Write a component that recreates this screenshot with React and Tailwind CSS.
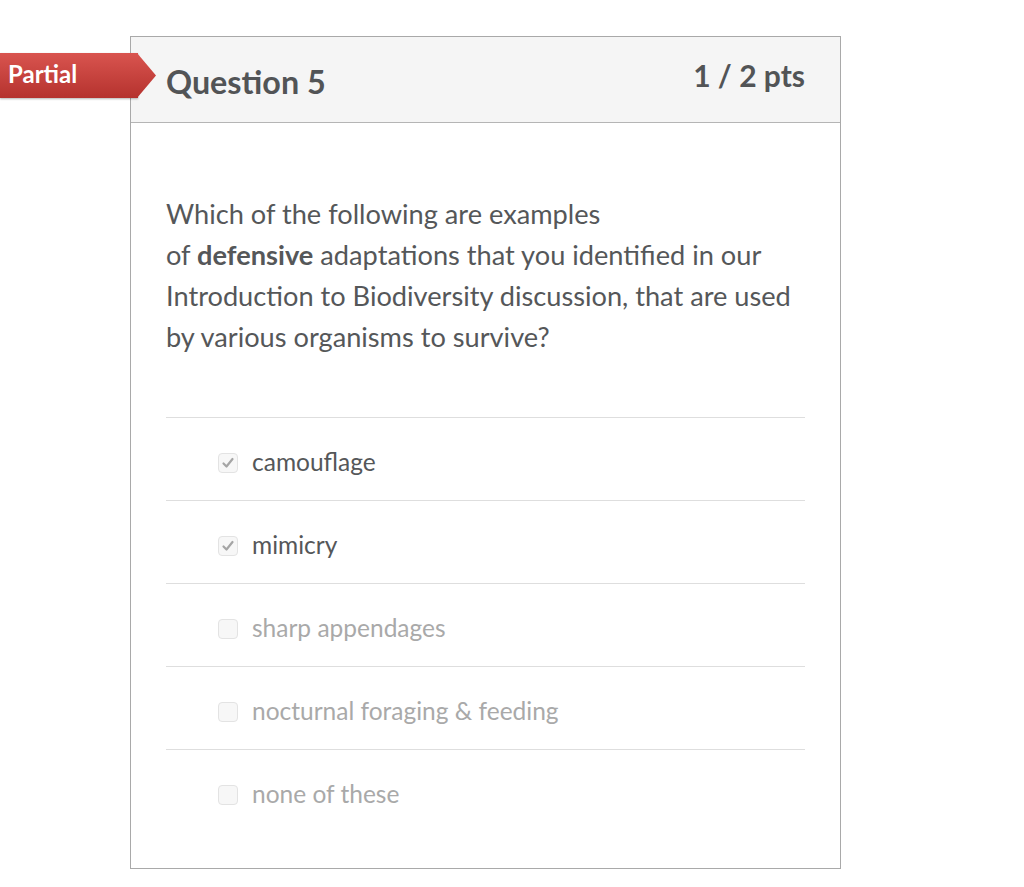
import React from "react";

const answers = [
  { text: "camouflage", checked: true },
  { text: "mimicry", checked: true },
  { text: "sharp appendages", checked: false },
  { text: "nocturnal foraging & feeding", checked: false },
  { text: "none of these", checked: false },
];

function Box({ checked }) {
  return (
    <span className="flex h-[20px] w-[20px] shrink-0 items-center justify-center rounded-[4px] border border-[#e3e3e3] bg-[#f7f7f7]">
      {checked && (
        <svg width="14" height="14" viewBox="0 0 14 14" fill="none">
          <path d="M2.5 7.5 L5.5 10.5 L11.5 3" stroke="#a5a5a5" strokeWidth="2.2" strokeLinecap="round" strokeLinejoin="round" />
        </svg>
      )}
    </span>
  );
}

export default function App() {
  return (
    <div className="relative h-[887px] w-[1024px] bg-white font-['Lato',sans-serif] text-[#555759]">
      {/* partial tag */}
      <div className="absolute left-0 top-[53px] z-10 flex h-[45px] items-center">
        <div className="flex h-full w-[138px] items-center bg-gradient-to-b from-[#d9544f] to-[#b5322e] pb-[3px] pl-[8px] text-[24px] font-bold text-white shadow-[0_1px_2px_rgba(0,0,0,0.3)]">
          Partial
        </div>
        <svg width="20" height="45" viewBox="0 0 20 45" className="-ml-px">
          <defs>
            <linearGradient id="tg" x1="0" y1="0" x2="0" y2="1">
              <stop offset="0" stopColor="#d9544f" />
              <stop offset="1" stopColor="#b5322e" />
            </linearGradient>
          </defs>
          <path d="M0 0 L19 22.5 L0 45 Z" fill="url(#tg)" />
        </svg>
      </div>

      <div className="pt-[36px] pl-[130px]">
        <div className="w-[711px] h-[833px] border border-[#a9a9a9] bg-white">
          <div className="flex h-[86px] items-start justify-between border-b border-[#b5b5b5] bg-[#f5f5f5] px-[35px]">
            <h2 className="mt-[29px] text-[32.3px] font-bold leading-none text-[#525456]">Question 5</h2>
            <div className="mt-[23px] text-[30px] font-bold leading-none text-[#525456]">1 / 2 pts</div>
          </div>

          <div className="px-[35px]">
            <p className="mt-[70px] text-[27.2px] leading-[41px]">
              Which of the following are examples
              <br />
              of <b>defensive</b> adaptations that you identified in our Introduction to Biodiversity discussion, that are used by various organisms to survive?
            </p>

            <div className="mt-[60px]">
              {answers.map((a) => (
                <div key={a.text} className="flex h-[83px] items-center gap-[14px] border-t border-[#dedede] pl-[52px] pt-[7px]">
                  <Box checked={a.checked} />
                  <span className={`text-[24.5px] ${a.checked ? "text-[#555759]" : "text-[#a9a9a9]"}`}>{a.text}</span>
                </div>
              ))}
            </div>
          </div>
        </div>
      </div>
    </div>
  );
}
